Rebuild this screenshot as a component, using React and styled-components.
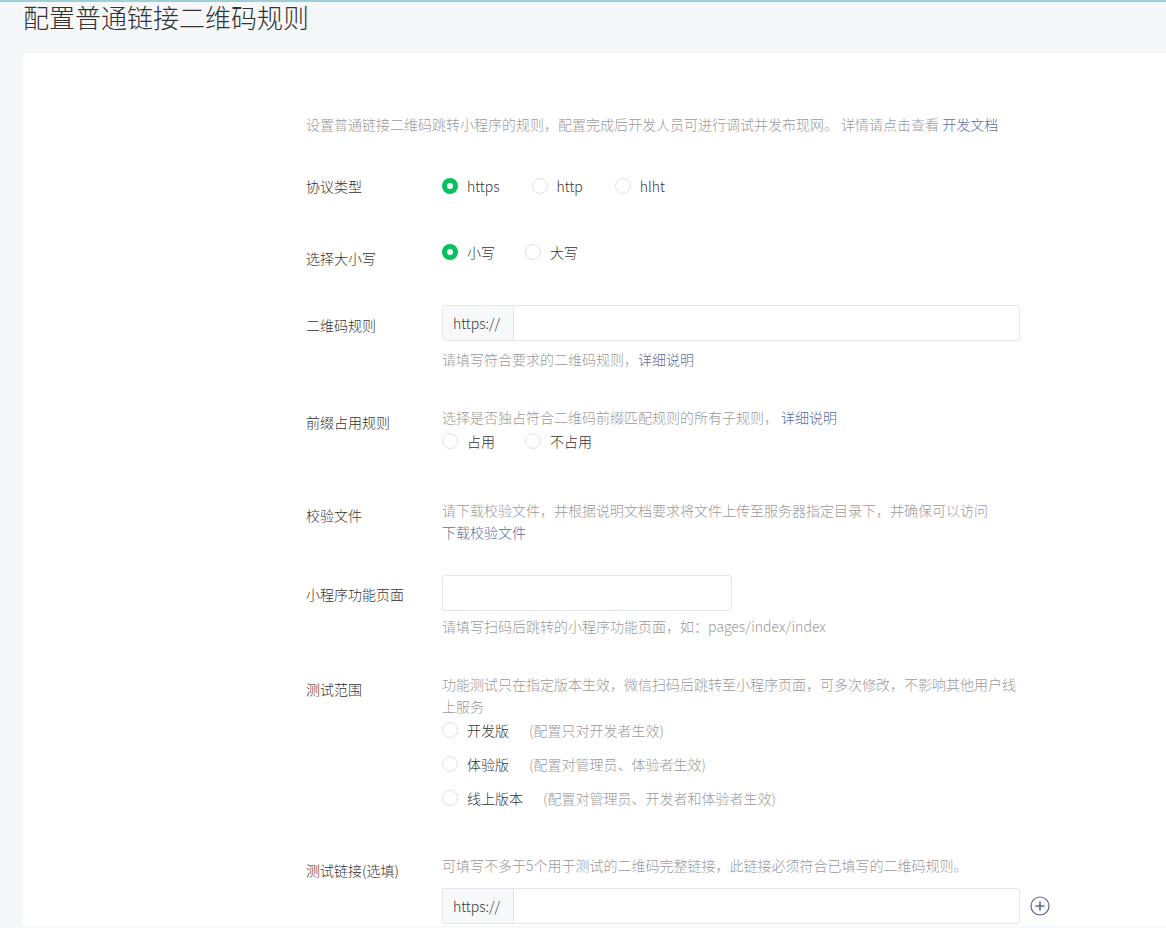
import React, { useState } from 'react';
import styled, { createGlobalStyle } from 'styled-components';

const GlobalStyle = createGlobalStyle`
  html, body {
    margin: 0;
    padding: 0;
    background: #f6f7f9;
    overflow: hidden;
  }
  body {
    font-family: "Noto Sans CJK SC", "Liberation Sans", sans-serif;
    font-weight: 300;
    color: #353535;
  }
`;

const protocols = ['https', 'http', 'hlht'];
const cases = ['小写', '大写'];
const occupy = ['占用', '不占用'];
const scopes = [
  { name: '开发版', note: '(配置只对开发者生效)' },
  { name: '体验版', note: '(配置对管理员、体验者生效)' },
  { name: '线上版本', note: '(配置对管理员、开发者和体验者生效)' },
];

const Radio = ({ checked, label, note, onClick }) => (
  <RadioItem onClick={onClick}>
    <RadioDot $checked={checked} />
    <RadioText>{label}</RadioText>
    {note && <RadioNote>{note}</RadioNote>}
  </RadioItem>
);

const PlusIcon = () => (
  <svg width="20" height="20" viewBox="0 0 20 20">
    <circle cx="10" cy="10" r="9" fill="none" stroke="#5a6a97" strokeWidth="1.2" />
    <path d="M10 5.5v9M5.5 10h9" stroke="#5a6a97" strokeWidth="1.6" />
  </svg>
);

const App = () => {
  const [protocol, setProtocol] = useState('https');
  const [letterCase, setLetterCase] = useState('小写');
  const [prefix, setPrefix] = useState(null);
  const [scope, setScope] = useState(null);

  return (
    <Page>
      <GlobalStyle />
      <Title>配置普通链接二维码规则</Title>
      <Card>
        <Intro>
          设置普通链接二维码跳转小程序的规则，配置完成后开发人员可进行调试并发布现网。 详情请点击查看 <Link>开发文档</Link>
        </Intro>

        <Row $mt={40}>
          <Label>协议类型</Label>
          <Content>
            <RadioGroup $gap={32}>
              {protocols.map(p => (
                <Radio key={p} label={p} checked={protocol === p} onClick={() => setProtocol(p)} />
              ))}
            </RadioGroup>
          </Content>
        </Row>

        <Row $mt={44}>
          <Label $pt={6}>选择大小写</Label>
          <Content>
            <RadioGroup>
              {cases.map(c => (
                <Radio key={c} label={c} checked={letterCase === c} onClick={() => setLetterCase(c)} />
              ))}
            </RadioGroup>
          </Content>
        </Row>

        <Row $mt={42}>
          <Label $pt={9}>二维码规则</Label>
          <Content>
            <InputBox $width={578}>
              <Addon>https://</Addon>
              <Field />
            </InputBox>
            <Hint $mt={7}>请填写符合要求的二维码规则，<Link>详细说明</Link></Hint>
          </Content>
        </Row>

        <Row $mt={36}>
          <Label $pt={5}>前缀占用规则</Label>
          <Content>
            <Hint>选择是否独占符合二维码前缀匹配规则的所有子规则， <Link>详细说明</Link></Hint>
            <RadioGroup $mt={2}>
              {occupy.map(o => (
                <Radio key={o} label={o} checked={prefix === o} onClick={() => setPrefix(o)} />
              ))}
            </RadioGroup>
          </Content>
        </Row>

        <Row $mt={47}>
          <Label $pt={5}>校验文件</Label>
          <Content>
            <Hint>请下载校验文件，并根据说明文档要求将文件上传至服务器指定目录下，并确保可以访问</Hint>
            <Link as="div">下载校验文件</Link>
          </Content>
        </Row>

        <Row $mt={32}>
          <Label $pt={8}>小程序功能页面</Label>
          <Content>
            <InputBox $width={290}>
              <Field />
            </InputBox>
            <Hint $mt={4}>请填写扫码后跳转的小程序功能页面，如：pages/index/index</Hint>
          </Content>
        </Row>

        <Row $mt={36}>
          <Label $pt={5}>测试范围</Label>
          <Content>
            <Hint>功能测试只在指定版本生效，微信扫码后跳转至小程序页面，可多次修改，不影响其他用户线上服务</Hint>
            <RadioGroup $vertical $mt={2}>
              {scopes.map(s => (
                <Radio key={s.name} label={s.name} note={s.note} checked={scope === s.name} onClick={() => setScope(s.name)} />
              ))}
            </RadioGroup>
          </Content>
        </Row>

        <Row $mt={45}>
          <Label $pt={5}>测试链接(选填)</Label>
          <Content>
            <Hint>可填写不多于5个用于测试的二维码完整链接，此链接必须符合已填写的二维码规则。</Hint>
            <LinkRow>
              <InputBox $width={578}>
                <Addon>https://</Addon>
                <Field />
              </InputBox>
              <AddButton><PlusIcon /></AddButton>
            </LinkRow>
          </Content>
        </Row>
      </Card>
    </Page>
  );
};

export default App;

const Page = styled.div`
  border-top: 2px solid #9fcfd6;
  padding-left: 23px;
  height: 926px;
  box-sizing: border-box;
`;

const Title = styled.h1`
  margin: 0;
  padding-top: 2px;
  font-size: 26px;
  line-height: 26px;
  font-weight: 300;
  color: #333;
`;

const Card = styled.div`
  margin-top: 23px;
  width: 1200px;
  min-height: 900px;
  background: #fff;
  border-radius: 4px;
  padding: 60px 0 0 283px;
  box-sizing: border-box;
`;

const Intro = styled.div`
  font-size: 14px;
  line-height: 22px;
  color: #9a9a9a;
`;

const Link = styled.span`
  color: #5a6e9c;
  font-size: 14px;
  line-height: 22px;
  cursor: pointer;
`;

const Row = styled.div`
  display: flex;
  align-items: flex-start;
  margin-top: ${p => p.$mt || 0}px;
`;

const Label = styled.div`
  width: 136px;
  flex-shrink: 0;
  padding-top: ${p => p.$pt || 0}px;
  margin-bottom: -${p => p.$pt || 0}px;
  font-size: 14px;
  line-height: 22px;
  color: #353535;
`;

const Content = styled.div`
  display: flex;
  flex-direction: column;
  width: 580px;
`;

const Hint = styled.div`
  margin-top: ${p => p.$mt || 0}px;
  font-size: 14px;
  line-height: 22px;
  color: #9a9a9a;
`;

const RadioGroup = styled.div`
  display: flex;
  flex-direction: ${p => (p.$vertical ? 'column' : 'row')};
  gap: ${p => (p.$vertical ? 12 : p.$gap || 30)}px;
  margin-top: ${p => p.$mt || 0}px;
`;

const RadioItem = styled.label`
  display: inline-flex;
  align-items: center;
  height: 22px;
  cursor: pointer;
`;

const RadioDot = styled.span`
  width: 16px;
  height: 16px;
  border-radius: 50%;
  box-sizing: border-box;
  border: ${p => (p.$checked ? 'none' : '1px solid #e2e2e2')};
  background: ${p => (p.$checked ? '#07c160' : '#fff')};
  display: flex;
  align-items: center;
  justify-content: center;
  &::after {
    content: '';
    width: 6px;
    height: 6px;
    border-radius: 50%;
    background: #fff;
    display: ${p => (p.$checked ? 'block' : 'none')};
  }
`;

const RadioText = styled.span`
  margin-left: 9px;
  font-size: 14px;
  line-height: 22px;
  color: #353535;
`;

const RadioNote = styled.span`
  margin-left: 20px;
  font-size: 14px;
  line-height: 22px;
  color: #9a9a9a;
`;

const InputBox = styled.div`
  display: flex;
  flex-shrink: 0;
  width: ${p => p.$width}px;
  height: 36px;
  border: 1px solid #e4e6ea;
  border-radius: 3px;
  box-sizing: border-box;
  overflow: hidden;
  background: #fff;
`;

const Addon = styled.div`
  width: 71px;
  flex-shrink: 0;
  padding-left: 10px;
  box-sizing: border-box;
  background: #f7f8fa;
  border-right: 1px solid #e4e6ea;
  font-size: 14px;
  line-height: 34px;
  color: #353535;
`;

const Field = styled.input`
  flex: 1;
  min-width: 0;
  border: none;
  outline: none;
  padding: 0 10px;
  font-size: 14px;
  font-family: inherit;
  background: transparent;
`;

const LinkRow = styled.div`
  display: flex;
  align-items: center;
  gap: 10px;
  margin-top: 12px;
`;

const AddButton = styled.span`
  display: flex;
  flex-shrink: 0;
  cursor: pointer;
`;
